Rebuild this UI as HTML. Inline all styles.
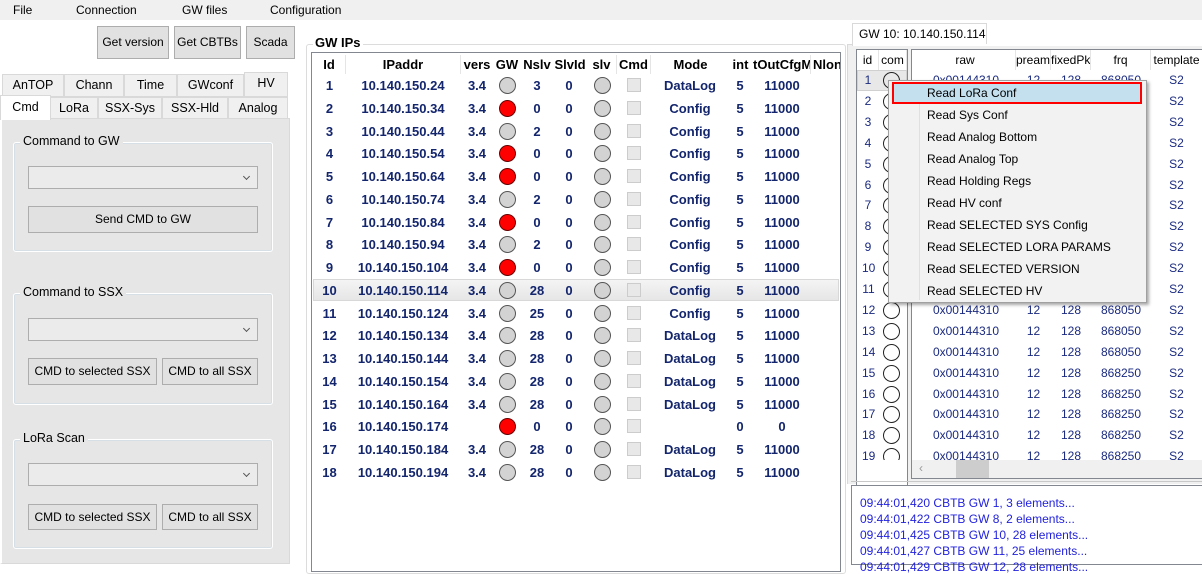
<!DOCTYPE html>
<html><head><meta charset="utf-8">
<style>
*{box-sizing:border-box;margin:0;padding:0}
body{width:1202px;height:564px;overflow:hidden;background:#fff;font-family:"Liberation Sans",sans-serif;font-size:12px;color:#000;position:relative}
.a{position:absolute}
.menu{left:0;top:0;width:1202px;height:20px;background:#f0f0f0}
.menu span{position:absolute;top:3px;font-size:12px}
.btn{position:absolute;background:#e1e1e1;border:1px solid #adadad;text-align:center;font-size:12px;white-space:nowrap}
.tab{position:absolute;background:#f0f0f0;border:1px solid #d9d9d9;text-align:center;font-size:12.5px;line-height:20px;white-space:nowrap}
.grp{position:absolute;border:1px solid #fff;border-radius:3px;box-shadow:0 0 0 1px #d5dfe5 inset}
.gt{position:absolute;background:#e6e6e6;padding:0 3px;font-size:12.5px;top:-9px;left:6px}
.cb{position:absolute;background:#ebebeb;border:1px solid #adadad}
.cb:after{content:"";position:absolute;right:8px;top:7px;width:4px;height:4px;border-right:1px solid #555;border-bottom:1px solid #555;transform:rotate(45deg)}
.row{position:absolute;left:312px;width:527px;height:23px;font-weight:bold;color:#13256d;font-size:13px;line-height:23px}
.row span{position:absolute;top:0;text-align:center}
.c1{left:0;width:35px}.c2{left:35px;width:112px}.c3{left:150px;width:30px}
.c5{left:210px;width:30px}.c6{left:242px;width:30px}
.c9{left:340px;width:76px}.c10{left:418px;width:20px}.c11{left:440px;width:60px}
.dot{position:absolute;width:17px;height:17px;border-radius:50%;border:1px solid #555;background:#d3d3d3;top:3px}
.red{background:#f00;border-color:#600}
.gw{left:187px}.sl{left:282px}
.chk{position:absolute;left:315px;top:4px;width:14px;height:14px;background:#e8e8e8;border:1px solid #ccc}
.hd{position:absolute;top:55px;height:19px;font-weight:bold;font-size:13px;text-align:center;line-height:19px;border-right:1px solid #e5e5e5}
.rr{position:absolute;left:912px;width:290px;height:21px;line-height:21px;color:#1a2a80;font-size:12px}
.rr span{position:absolute;text-align:center}
.ir{position:absolute;left:857px;width:50px;height:21px;line-height:21px;color:#1a2a80;font-size:12px}
.ir i{position:absolute;left:0;width:22px;text-align:center;font-style:normal;overflow:hidden}
.ir b{position:absolute;left:26px;top:2px;width:17px;height:17px;border:1.5px solid #222;border-radius:50%}
.mi{position:absolute;left:927px;font-size:12px;color:#000}
.lg{position:absolute;left:860px;font-size:12px;color:#2222dd}
.rh{position:absolute;top:50px;height:20px;line-height:20px;text-align:center;font-size:12px;border-right:1px solid #e5e5e5;overflow:hidden;white-space:nowrap}
</style></head><body>
<div class="a menu"><span style="left:13px">File</span><span style="left:76px">Connection</span><span style="left:182px">GW files</span><span style="left:270px">Configuration</span></div>

<div class="btn" style="left:97px;top:26px;width:72px;height:33px;line-height:31px">Get version</div>
<div class="btn" style="left:174px;top:26px;width:67px;height:33px;line-height:31px">Get CBTBs</div>
<div class="btn" style="left:246px;top:26px;width:49px;height:33px;line-height:31px">Scada</div>

<div class="tab" style="left:2px;top:74px;width:62px;height:23px">AnTOP</div>
<div class="tab" style="left:64px;top:74px;width:60px;height:23px">Chann</div>
<div class="tab" style="left:124px;top:74px;width:53px;height:23px">Time</div>
<div class="tab" style="left:177px;top:74px;width:67px;height:23px">GWconf</div>
<div class="tab" style="left:244px;top:72px;width:44px;height:25px">HV</div>
<div class="tab" style="left:50px;top:97px;width:48px;height:22px">LoRa</div>
<div class="tab" style="left:98px;top:97px;width:64px;height:22px">SSX-Sys</div>
<div class="tab" style="left:162px;top:97px;width:66px;height:22px">SSX-Hld</div>
<div class="tab" style="left:228px;top:97px;width:60px;height:22px">Analog</div>
<div class="a" style="left:0;top:118px;width:290px;height:446px;background:#e6e6e6;border:1px solid #d9d9d9;border-left:2px solid #fff"></div>
<div class="tab" style="left:0;top:95px;width:51px;height:25px;background:#fff;border-bottom:none;line-height:22px">Cmd</div>

<div class="grp" style="left:13px;top:142px;width:260px;height:110px"><span class="gt">Command to GW</span></div>
<div class="cb" style="left:28px;top:166px;width:230px;height:23px"></div>
<div class="btn" style="left:28px;top:206px;width:230px;height:27px;line-height:25px">Send CMD to GW</div>

<div class="grp" style="left:13px;top:293px;width:260px;height:112px"><span class="gt">Command to SSX</span></div>
<div class="cb" style="left:28px;top:318px;width:230px;height:23px"></div>
<div class="btn" style="left:28px;top:358px;width:129px;height:27px;line-height:25px">CMD to selected SSX</div>
<div class="btn" style="left:162px;top:358px;width:96px;height:27px;line-height:25px">CMD to all SSX</div>

<div class="grp" style="left:13px;top:439px;width:260px;height:110px"><span class="gt">LoRa Scan</span></div>
<div class="cb" style="left:28px;top:463px;width:230px;height:23px"></div>
<div class="btn" style="left:28px;top:504px;width:129px;height:26px;line-height:24px">CMD to selected SSX</div>
<div class="btn" style="left:162px;top:504px;width:96px;height:26px;line-height:24px">CMD to all SSX</div>

<!-- middle -->
<div class="a" style="left:306px;top:44px;width:540px;height:530px;border:1px solid #dcdcdc;border-radius:3px"></div>
<div class="a" style="left:313px;top:35px;background:#fff;padding:0 2px;font-weight:bold;font-size:13px">GW IPs</div>
<div class="a" style="left:311px;top:52px;width:530px;height:520px;border:1px solid #828790"></div>
<div class="hd" style="left:313px;width:33px">Id</div>
<div class="hd" style="left:346px;width:115px">IPaddr</div>
<div class="hd" style="left:461px;width:32px;border:none">vers</div>
<div class="hd" style="left:493px;width:28px;border:none">GW</div>
<div class="hd" style="left:521px;width:32px;border:none">Nslv</div>
<div class="hd" style="left:553px;width:34px;border:none">SlvId</div>
<div class="hd" style="left:587px;width:30px">slv</div>
<div class="hd" style="left:617px;width:34px">Cmd</div>
<div class="hd" style="left:651px;width:79px;border:none">Mode</div>
<div class="hd" style="left:730px;width:21px;border:none">int</div>
<div class="hd" style="left:751px;width:60px;overflow:hidden;white-space:nowrap;text-align:left;padding-left:2px">tOutCfgMs</div>
<div class="hd" style="left:811px;width:29px;overflow:hidden;white-space:nowrap;text-align:left;padding-left:2px;border:none">Nlon</div>

<div class="a" style="left:313px;top:279px;width:526px;height:22px;background:linear-gradient(#f4f4f4,#e6e6e6);border:1px solid #d8d8d8"></div>

<div class="row" style="top:74px"><span class="c1">1</span><span class="c2">10.140.150.24</span><span class="c3">3.4</span><i class="dot gw"></i><span class="c5">3</span><span class="c6">0</span><i class="dot sl"></i><i class="chk"></i><span class="c9">DataLog</span><span class="c10">5</span><span class="c11">11000</span></div>
<div class="row" style="top:97px"><span class="c1">2</span><span class="c2">10.140.150.34</span><span class="c3">3.4</span><i class="dot gw red"></i><span class="c5">0</span><span class="c6">0</span><i class="dot sl"></i><i class="chk"></i><span class="c9">Config</span><span class="c10">5</span><span class="c11">11000</span></div>
<div class="row" style="top:120px"><span class="c1">3</span><span class="c2">10.140.150.44</span><span class="c3">3.4</span><i class="dot gw"></i><span class="c5">2</span><span class="c6">0</span><i class="dot sl"></i><i class="chk"></i><span class="c9">Config</span><span class="c10">5</span><span class="c11">11000</span></div>
<div class="row" style="top:142px"><span class="c1">4</span><span class="c2">10.140.150.54</span><span class="c3">3.4</span><i class="dot gw red"></i><span class="c5">0</span><span class="c6">0</span><i class="dot sl"></i><i class="chk"></i><span class="c9">Config</span><span class="c10">5</span><span class="c11">11000</span></div>
<div class="row" style="top:165px"><span class="c1">5</span><span class="c2">10.140.150.64</span><span class="c3">3.4</span><i class="dot gw red"></i><span class="c5">0</span><span class="c6">0</span><i class="dot sl"></i><i class="chk"></i><span class="c9">Config</span><span class="c10">5</span><span class="c11">11000</span></div>
<div class="row" style="top:188px"><span class="c1">6</span><span class="c2">10.140.150.74</span><span class="c3">3.4</span><i class="dot gw"></i><span class="c5">2</span><span class="c6">0</span><i class="dot sl"></i><i class="chk"></i><span class="c9">Config</span><span class="c10">5</span><span class="c11">11000</span></div>
<div class="row" style="top:211px"><span class="c1">7</span><span class="c2">10.140.150.84</span><span class="c3">3.4</span><i class="dot gw red"></i><span class="c5">0</span><span class="c6">0</span><i class="dot sl"></i><i class="chk"></i><span class="c9">Config</span><span class="c10">5</span><span class="c11">11000</span></div>
<div class="row" style="top:233px"><span class="c1">8</span><span class="c2">10.140.150.94</span><span class="c3">3.4</span><i class="dot gw"></i><span class="c5">2</span><span class="c6">0</span><i class="dot sl"></i><i class="chk"></i><span class="c9">Config</span><span class="c10">5</span><span class="c11">11000</span></div>
<div class="row" style="top:256px"><span class="c1">9</span><span class="c2">10.140.150.104</span><span class="c3">3.4</span><i class="dot gw red"></i><span class="c5">0</span><span class="c6">0</span><i class="dot sl"></i><i class="chk"></i><span class="c9">Config</span><span class="c10">5</span><span class="c11">11000</span></div>
<div class="row" style="top:279px"><span class="c1">10</span><span class="c2">10.140.150.114</span><span class="c3">3.4</span><i class="dot gw"></i><span class="c5">28</span><span class="c6">0</span><i class="dot sl"></i><i class="chk"></i><span class="c9">Config</span><span class="c10">5</span><span class="c11">11000</span></div>
<div class="row" style="top:302px"><span class="c1">11</span><span class="c2">10.140.150.124</span><span class="c3">3.4</span><i class="dot gw"></i><span class="c5">25</span><span class="c6">0</span><i class="dot sl"></i><i class="chk"></i><span class="c9">Config</span><span class="c10">5</span><span class="c11">11000</span></div>
<div class="row" style="top:324px"><span class="c1">12</span><span class="c2">10.140.150.134</span><span class="c3">3.4</span><i class="dot gw"></i><span class="c5">28</span><span class="c6">0</span><i class="dot sl"></i><i class="chk"></i><span class="c9">DataLog</span><span class="c10">5</span><span class="c11">11000</span></div>
<div class="row" style="top:347px"><span class="c1">13</span><span class="c2">10.140.150.144</span><span class="c3">3.4</span><i class="dot gw"></i><span class="c5">28</span><span class="c6">0</span><i class="dot sl"></i><i class="chk"></i><span class="c9">DataLog</span><span class="c10">5</span><span class="c11">11000</span></div>
<div class="row" style="top:370px"><span class="c1">14</span><span class="c2">10.140.150.154</span><span class="c3">3.4</span><i class="dot gw"></i><span class="c5">28</span><span class="c6">0</span><i class="dot sl"></i><i class="chk"></i><span class="c9">DataLog</span><span class="c10">5</span><span class="c11">11000</span></div>
<div class="row" style="top:393px"><span class="c1">15</span><span class="c2">10.140.150.164</span><span class="c3">3.4</span><i class="dot gw"></i><span class="c5">28</span><span class="c6">0</span><i class="dot sl"></i><i class="chk"></i><span class="c9">DataLog</span><span class="c10">5</span><span class="c11">11000</span></div>
<div class="row" style="top:415px"><span class="c1">16</span><span class="c2">10.140.150.174</span><span class="c3"></span><i class="dot gw red"></i><span class="c5">0</span><span class="c6">0</span><i class="dot sl"></i><i class="chk"></i><span class="c9"></span><span class="c10">0</span><span class="c11">0</span></div>
<div class="row" style="top:438px"><span class="c1">17</span><span class="c2">10.140.150.184</span><span class="c3">3.4</span><i class="dot gw"></i><span class="c5">28</span><span class="c6">0</span><i class="dot sl"></i><i class="chk"></i><span class="c9">DataLog</span><span class="c10">5</span><span class="c11">11000</span></div>
<div class="row" style="top:461px"><span class="c1">18</span><span class="c2">10.140.150.194</span><span class="c3">3.4</span><i class="dot gw"></i><span class="c5">28</span><span class="c6">0</span><i class="dot sl"></i><i class="chk"></i><span class="c9">DataLog</span><span class="c10">5</span><span class="c11">11000</span></div>

<!-- right -->
<div class="a" style="left:847px;top:44px;width:355px;height:440px;background:#f0f0f0;border-left:1px solid #d9d9d9;border-top:1px solid #d9d9d9"></div>
<div class="a" style="left:852px;top:23px;width:135px;height:23px;background:#fff;border:1px solid #d9d9d9;border-bottom:none;line-height:21px;padding-left:6px;font-size:12px;white-space:nowrap">GW 10: 10.140.150.114</div>
<div class="a" style="left:986px;top:44px;width:216px;height:2px;background:#fff"></div>
<div class="a" style="left:856px;top:49px;width:52px;height:462px;background:#fff;border:1px solid #828790"></div>
<div class="a" style="left:911px;top:49px;width:291px;height:430px;background:#fff;border:1px solid #828790;border-right:none"></div>
<div class="rh" style="left:857px;width:22px">id</div>
<div class="rh" style="left:879px;width:28px">com</div>
<div class="rh" style="left:915px;width:101px">raw</div>
<div class="rh" style="left:1016px;width:35px">pream</div>
<div class="rh" style="left:1051px;width:40px">fixedPk</div>
<div class="rh" style="left:1091px;width:60px">frq</div>
<div class="rh" style="left:1151px;width:51px;border:none">template</div>
<div class="a" style="left:857px;top:70px;width:50px;height:21px;background:#e8e8e8;border:1px solid #d0d0d0"></div>

<div class="ir" style="top:70px"><i>1</i><b></b></div>
<div class="ir" style="top:91px"><i>2</i><b></b></div>
<div class="ir" style="top:112px"><i>3</i><b></b></div>
<div class="ir" style="top:133px"><i>4</i><b></b></div>
<div class="ir" style="top:154px"><i>5</i><b></b></div>
<div class="ir" style="top:175px"><i>6</i><b></b></div>
<div class="ir" style="top:195px"><i>7</i><b></b></div>
<div class="ir" style="top:216px"><i>8</i><b></b></div>
<div class="ir" style="top:237px"><i>9</i><b></b></div>
<div class="ir" style="top:258px"><i style="width:13px;left:5px">10</i><b></b></div>
<div class="ir" style="top:279px"><i style="width:13px;left:5px">11</i><b></b></div>
<div class="ir" style="top:300px"><i style="width:13px;left:5px">12</i><b></b></div>
<div class="ir" style="top:321px"><i style="width:13px;left:5px">13</i><b></b></div>
<div class="ir" style="top:342px"><i style="width:13px;left:5px">14</i><b></b></div>
<div class="ir" style="top:363px"><i style="width:13px;left:5px">15</i><b></b></div>
<div class="ir" style="top:384px"><i style="width:13px;left:5px">16</i><b></b></div>
<div class="ir" style="top:404px"><i style="width:13px;left:5px">17</i><b></b></div>
<div class="ir" style="top:425px"><i style="width:13px;left:5px">18</i><b></b></div>
<div class="ir" style="top:446px;height:14px;overflow:hidden"><i style="width:13px;left:5px">19</i><b></b></div>

<div class="rr" style="top:70px"><span style="left:4px;width:100px">0x00144310</span><span style="left:104px;width:35px">12</span><span style="left:139px;width:40px">128</span><span style="left:179px;width:60px">868050</span><span style="left:239px;width:51px">S2</span></div>
<div class="rr" style="top:91px"><span style="left:239px;width:51px">S2</span></div>
<div class="rr" style="top:112px"><span style="left:239px;width:51px">S2</span></div>
<div class="rr" style="top:133px"><span style="left:239px;width:51px">S2</span></div>
<div class="rr" style="top:154px"><span style="left:239px;width:51px">S2</span></div>
<div class="rr" style="top:175px"><span style="left:239px;width:51px">S2</span></div>
<div class="rr" style="top:195px"><span style="left:239px;width:51px">S2</span></div>
<div class="rr" style="top:216px"><span style="left:239px;width:51px">S2</span></div>
<div class="rr" style="top:237px"><span style="left:239px;width:51px">S2</span></div>
<div class="rr" style="top:258px"><span style="left:239px;width:51px">S2</span></div>
<div class="rr" style="top:279px"><span style="left:239px;width:51px">S2</span></div>
<div class="rr" style="top:300px"><span style="left:4px;width:100px">0x00144310</span><span style="left:104px;width:35px">12</span><span style="left:139px;width:40px">128</span><span style="left:179px;width:60px">868050</span><span style="left:239px;width:51px">S2</span></div>
<div class="rr" style="top:321px"><span style="left:4px;width:100px">0x00144310</span><span style="left:104px;width:35px">12</span><span style="left:139px;width:40px">128</span><span style="left:179px;width:60px">868050</span><span style="left:239px;width:51px">S2</span></div>
<div class="rr" style="top:342px"><span style="left:4px;width:100px">0x00144310</span><span style="left:104px;width:35px">12</span><span style="left:139px;width:40px">128</span><span style="left:179px;width:60px">868050</span><span style="left:239px;width:51px">S2</span></div>
<div class="rr" style="top:363px"><span style="left:4px;width:100px">0x00144310</span><span style="left:104px;width:35px">12</span><span style="left:139px;width:40px">128</span><span style="left:179px;width:60px">868250</span><span style="left:239px;width:51px">S2</span></div>
<div class="rr" style="top:384px"><span style="left:4px;width:100px">0x00144310</span><span style="left:104px;width:35px">12</span><span style="left:139px;width:40px">128</span><span style="left:179px;width:60px">868250</span><span style="left:239px;width:51px">S2</span></div>
<div class="rr" style="top:404px"><span style="left:4px;width:100px">0x00144310</span><span style="left:104px;width:35px">12</span><span style="left:139px;width:40px">128</span><span style="left:179px;width:60px">868250</span><span style="left:239px;width:51px">S2</span></div>
<div class="rr" style="top:425px"><span style="left:4px;width:100px">0x00144310</span><span style="left:104px;width:35px">12</span><span style="left:139px;width:40px">128</span><span style="left:179px;width:60px">868250</span><span style="left:239px;width:51px">S2</span></div>
<div class="rr" style="top:446px;height:14px;overflow:hidden"><span style="left:4px;width:100px">0x00144310</span><span style="left:104px;width:35px">12</span><span style="left:139px;width:40px">128</span><span style="left:179px;width:60px">868250</span><span style="left:239px;width:51px">S2</span></div>
<div class="a" style="left:912px;top:460px;width:290px;height:18px;background:#f0f0f0"></div>
<div class="a" style="left:919px;top:461px;color:#999;font-size:12px">&lsaquo;</div>
<div class="a" style="left:956px;top:460px;width:33px;height:18px;background:#cdcdcd"></div>
<div class="a" style="left:851px;top:481px;width:351px;height:1px;background:#c8c8c8"></div>

<div class="a" style="left:851px;top:485px;width:351px;height:80px;background:#fff;border:1px solid #828790;border-right:none"></div>
<div class="lg" style="top:496px">09:44:01,420 CBTB GW 1, 3 elements...</div>
<div class="lg" style="top:512px">09:44:01,422 CBTB GW 8, 2 elements...</div>
<div class="lg" style="top:528px">09:44:01,425 CBTB GW 10, 28 elements...</div>
<div class="lg" style="top:544px">09:44:01,427 CBTB GW 11, 25 elements...</div>
<div class="lg" style="top:560px">09:44:01,429 CBTB GW 12, 28 elements...</div>

<!-- context menu -->
<div class="a" style="left:888px;top:80px;width:259px;height:223px;background:#f2f2f2;border:1px solid #a0a0a0;box-shadow:2px 2px 3px rgba(0,0,0,.35)"></div>
<div class="a" style="left:919px;top:83px;width:1px;height:217px;background:#e0e0e0"></div>
<div class="a" style="left:892px;top:82px;width:250px;height:22px;background:#c4e0ee;border:2px solid #f00"></div>
<div class="mi" style="top:86px">Read LoRa Conf</div>
<div class="mi" style="top:108px">Read Sys Conf</div>
<div class="mi" style="top:130px">Read Analog Bottom</div>
<div class="mi" style="top:152px">Read Analog Top</div>
<div class="mi" style="top:174px">Read Holding Regs</div>
<div class="mi" style="top:196px">Read HV conf</div>
<div class="mi" style="top:218px">Read SELECTED SYS Config</div>
<div class="mi" style="top:240px">Read SELECTED LORA PARAMS</div>
<div class="mi" style="top:262px">Read SELECTED VERSION</div>
<div class="mi" style="top:284px">Read SELECTED HV</div>
</body></html>
